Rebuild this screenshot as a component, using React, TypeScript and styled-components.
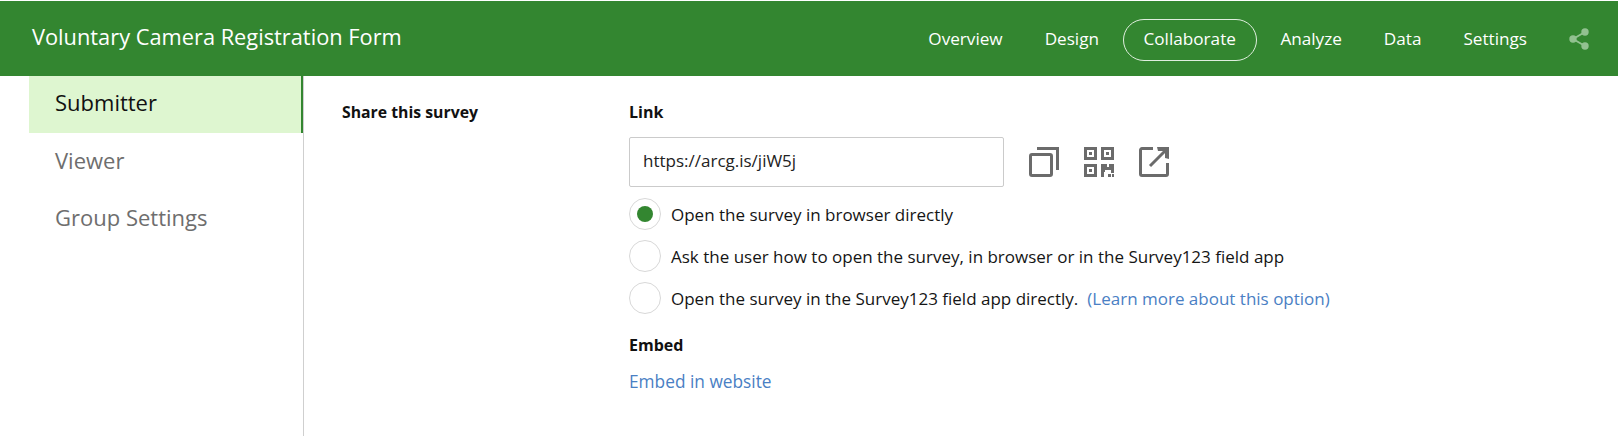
import React from "react";
import styled, { createGlobalStyle } from "styled-components";

const Global = createGlobalStyle`
  html, body { margin: 0; padding: 0; background: #fff; }
  body { font-family: "Open Sans", "Noto Sans", sans-serif; color: #151515; overflow: hidden; }
`;
const Page = styled.div`
  width: 1618px; height: 436px; display: flex; flex-direction: column; overflow: hidden;
`;
const TopBar = styled.header`
  height: 75px; flex: none; margin-top: 1px; background: #338630; display: flex; align-items: center;
  padding: 0 29px 0 32px; color: #fff;
`;
const Title = styled.div`
  font-size: 21.8px; flex: 1; position: relative; top: -2px;
`;
const Nav = styled.nav`
  display: flex; align-items: center; margin-top: 2px;
`;
const NavItem = styled.a<{ $active?: boolean }>`
  font-size: 17.15px; color: #fff; height: 42px; display: flex; align-items: center; padding: 0 20px 2px;
  border: 1px solid ${(p) => (p.$active ? "#dfeede" : "transparent")}; border-radius: 21px; box-sizing: border-box;
  margin: 0 ${(p) => (p.$active ? "2.5px" : "0")};
`;
const ShareBtn = styled.div`
  display: flex; margin-left: 21px; color: #92c190;
`;
const Body = styled.div`
  flex: 1; display: flex; padding-left: 29px;
`;
const Side = styled.aside`
  width: 274px; flex: none; border-right: 1px solid #cfcfcf; box-sizing: content-box;
`;
const SideItem = styled.div<{ $active?: boolean }>`
  height: 57px; display: flex; align-items: center; padding: 0 0 ${(p) => (p.$active ? "5px" : "3px")} 26px; font-size: 22px;
  color: ${(p) => (p.$active ? "#111" : "#6e6e6e")};
  background: ${(p) => (p.$active ? "#def6d0" : "transparent")};
  box-sizing: border-box;
  ${(p) => (p.$active ? "border-right: 2px solid #338630;" : "")}
`;
const Main = styled.main`
  flex: 1; display: flex; padding: 25px 0 0 38px;
`;
const SectionLabel = styled.div`
  width: 287px; flex: none; font-size: 15.8px; font-weight: 700; color: #111; line-height: 22px;
`;
const Content = styled.div`
  display: flex; flex-direction: column; align-items: flex-start;
`;
const FieldLabel = styled.div`
  font-size: 16px; font-weight: 700; color: #111; line-height: 22px;
`;
const LinkRow = styled.div`
  display: flex; align-items: center; margin-top: 14px;
`;
const UrlInput = styled.div`
  width: 375px; height: 50px; box-sizing: border-box; border: 1px solid #cbcbcb; border-radius: 2px;
  display: flex; align-items: center; padding: 0 0 3px 13px; font-size: 17px; color: #222;
`;
const IconRow = styled.div`
  display: flex; gap: 25px; margin-left: 25px; color: #6b6b6b;
`;
const RadioList = styled.div`
  display: flex; flex-direction: column; gap: 10px; margin-top: 11px;
`;
const RadioRow = styled.label`
  display: flex; align-items: center; gap: 10px; font-size: 17px; color: #151515; height: 32px;
`;
const Radio = styled.span<{ $on?: boolean }>`
  width: 32px; height: 32px; border-radius: 50%; border: 1px solid #d8d8d8; box-sizing: border-box;
  display: flex; align-items: center; justify-content: center; flex: none;
  &::after { content: ""; width: 16px; height: 16px; border-radius: 50%; background: ${(p) => (p.$on ? "#338630" : "transparent")}; }
`;
const A = styled.a`
  color: #4a80c4;
`;
const Learn = styled(A)`
  margin-left: 9px;
`;
const EmbedLabel = styled(FieldLabel)`
  margin-top: 20px;
`;
const EmbedLink = styled(A)`
  font-size: 17.3px; margin-top: 15px; line-height: 22px;
`;

const CopyIcon = () => (
  <svg width="30" height="30" viewBox="0 0 30 30" fill="none" stroke="currentColor" strokeWidth="3">
    <rect x="1.5" y="7.5" width="21" height="21" rx="1.5" />
    <path d="M8 1.5h20.5V23" />
  </svg>
);
const QrIcon = () => (
  <svg width="30" height="30" viewBox="0 0 30 30" fill="currentColor">
    <path fillRule="evenodd" d="M0 0h13v13H0zM3 3v7h7V3zM5 5h3v3H5zM17 0h13v13H17zM20 3v7h7V3zM22 5h3v3h-3zM0 17h13v13H0zM3 20v7h7v-7zM5 22h3v3H5z" />
    <path d="M17 17h6v3h2v-3h5v9h-3v-3h-6v2h-1v5h-3zM24 27h3v3h-3zM28 27h2v3h-2z" />
  </svg>
);
const ExternalIcon = () => (
  <svg width="31" height="30" viewBox="0 0 31 30" fill="none" stroke="currentColor" strokeWidth="3">
    <path d="M14 1.5H3A1.5 1.5 0 0 0 1.5 3v24A1.5 1.5 0 0 0 3 28.5h24a1.5 1.5 0 0 0 1.5-1.5V16" />
    <path d="M11 19 27 3" />
    <path d="M18 0h12v12l-4-1V4h-7z" fill="currentColor" stroke="none" />
  </svg>
);
const ShareIcon = () => (
  <svg width="20" height="22" viewBox="0 0 20 22" fill="currentColor">
    <circle cx="16" cy="4" r="3.7" /><circle cx="4" cy="11" r="3.7" /><circle cx="16" cy="18" r="3.7" />
    <path d="M4 11 16 4M4 11l12 7" stroke="currentColor" strokeWidth="2" />
  </svg>
);

export default function App() {
  return (
    <Page>
      <Global />
      <TopBar>
        <Title>Voluntary Camera Registration Form</Title>
        <Nav>
          <NavItem>Overview</NavItem>
          <NavItem>Design</NavItem>
          <NavItem $active>Collaborate</NavItem>
          <NavItem>Analyze</NavItem>
          <NavItem>Data</NavItem>
          <NavItem>Settings</NavItem>
        </Nav>
        <ShareBtn><ShareIcon /></ShareBtn>
      </TopBar>
      <Body>
        <Side>
          <SideItem $active>Submitter</SideItem>
          <SideItem>Viewer</SideItem>
          <SideItem>Group Settings</SideItem>
        </Side>
        <Main>
          <SectionLabel>Share this survey</SectionLabel>
          <Content>
            <FieldLabel>Link</FieldLabel>
            <LinkRow>
              <UrlInput>https://arcg.is/jiW5j</UrlInput>
              <IconRow><CopyIcon /><QrIcon /><ExternalIcon /></IconRow>
            </LinkRow>
            <RadioList>
              <RadioRow><Radio $on />Open the survey in browser directly</RadioRow>
              <RadioRow><Radio />Ask the user how to open the survey, in browser or in the Survey123 field app</RadioRow>
              <RadioRow><Radio /><span>Open the survey in the Survey123 field app directly.<Learn>(Learn more about this option)</Learn></span></RadioRow>
            </RadioList>
            <EmbedLabel>Embed</EmbedLabel>
            <EmbedLink>Embed in website</EmbedLink>
          </Content>
        </Main>
      </Body>
    </Page>
  );
}
